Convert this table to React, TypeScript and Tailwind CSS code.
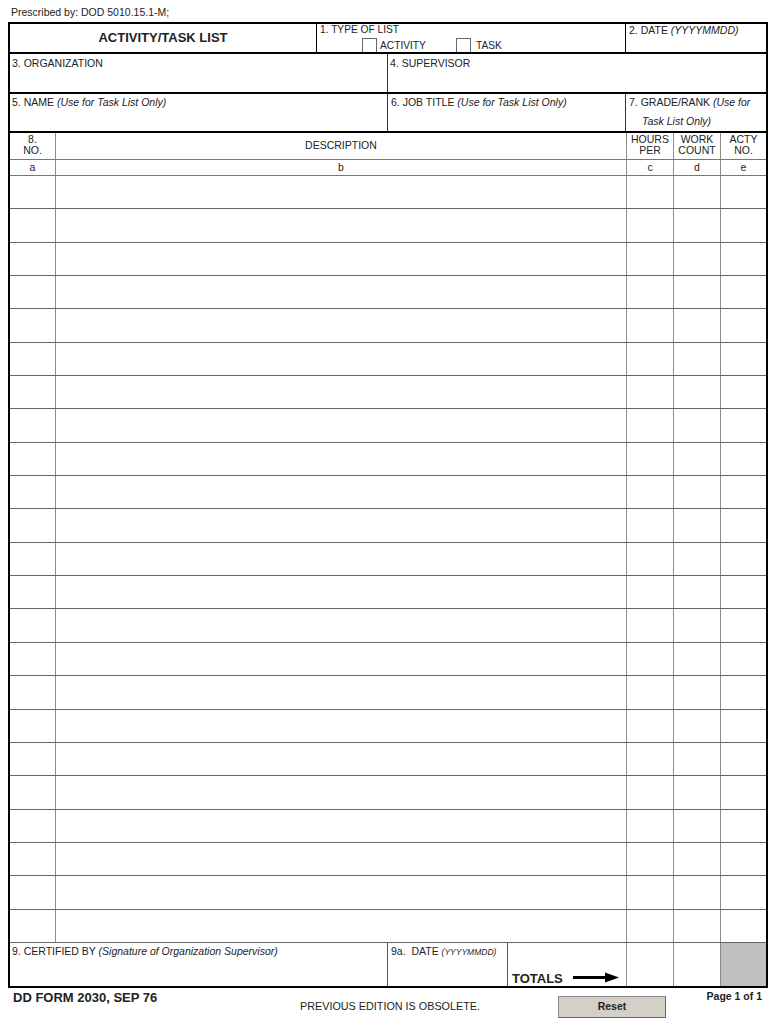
import React from "react";

function Row({ i }: { i: number }) {
  return (
    <div className="flex-1 flex border-b border-[#666]" data-i={i}>
      <div className="w-[46px] border-r border-[#8c8c8c]" />
      <div className="w-[571px] border-r border-[#8c8c8c]" />
      <div className="w-[47px] border-r border-[#8c8c8c]" />
      <div className="w-[47px] border-r border-[#8c8c8c]" />
      <div className="flex-1" />
    </div>
  );
}

export default function App() {
  const rows = Array.from({ length: 23 }, (_, i) => i);
  return (
    <div className="w-[779px] h-[1024px] bg-white text-[#222] font-['Liberation_Sans',Arial,sans-serif] overflow-hidden">
      <div className="h-[22px] pl-[11px] pt-[6px] text-[10.5px] leading-[12px]">
        Prescribed by: DOD 5010.15.1-M;
      </div>
      <div className="ml-[8px] w-[760px] border-2 border-black">
        {/* Row 1 */}
        <div className="flex h-[30px] border-b-2 border-black">
          <div className="w-[307px] border-r border-black flex items-center justify-center text-[13px] font-bold leading-[14px]">
            ACTIVITY/TASK LIST
          </div>
          <div className="w-[309px] border-r border-black flex flex-col text-[10.2px] leading-[12px]">
            <div className="pl-[3px]">1. TYPE OF LIST</div>
            <div className="mt-auto flex items-end pl-[45px]">
              <div className="w-[94px] flex items-center">
                <span className="block w-[15px] h-[14px] border border-b-0 border-[#666]" />
                <span className="ml-[3px] mt-[2px]">ACTIVITY</span>
              </div>
              <div className="flex items-center">
                <span className="block w-[15px] h-[14px] border border-b-0 border-[#666]" />
                <span className="ml-[5px] mt-[2px]">TASK</span>
              </div>
            </div>
          </div>
          <div className="flex-1 pl-[3px] text-[10.5px] leading-[12px]">
            2. DATE <i>(YYYYMMDD)</i>
          </div>
        </div>
        {/* Row 2 */}
        <div className="flex h-[40px] border-b-2 border-black text-[10.5px] leading-[12px]">
          <div className="w-[378px] border-r border-[#333] pl-[2px] pt-[3px]">3. ORGANIZATION</div>
          <div className="flex-1 pl-[2px] pt-[3px]">4. SUPERVISOR</div>
        </div>
        {/* Row 3 */}
        <div className="flex h-[39px] border-b-2 border-black text-[10.5px] leading-[12px]">
          <div className="w-[378px] border-r border-[#333] pl-[2px] pt-[2px]">
            5. NAME <i>(Use for Task List Only)</i>
          </div>
          <div className="w-[238px] border-r border-[#333] pl-[3px] pt-[2px]">
            6. JOB TITLE <i>(Use for Task List Only)</i>
          </div>
          <div className="flex-1 pl-[3px] pt-[2px]">
            <div>
              7. GRADE/RANK <i>(Use for</i>
            </div>
            <div className="mt-[7px] pl-[13px]">
              <i>Task List Only)</i>
            </div>
          </div>
        </div>
        {/* Header row */}
        <div className="flex h-[27px] border-b border-[#777] text-[10.5px] leading-[11.5px] text-center">
          <div className="w-[46px] border-r border-[#8c8c8c] pt-[0.5px]">
            <div>8.</div>
            <div>NO.</div>
          </div>
          <div className="w-[571px] border-r border-[#8c8c8c] flex items-center justify-center">
            DESCRIPTION
          </div>
          <div className="w-[47px] border-r border-[#8c8c8c] pt-[0.5px]">
            <div>HOURS</div>
            <div>PER</div>
          </div>
          <div className="w-[47px] border-r border-[#8c8c8c] pt-[0.5px]">
            <div>WORK</div>
            <div>COUNT</div>
          </div>
          <div className="flex-1 pt-[0.5px]">
            <div>ACTY</div>
            <div>NO.</div>
          </div>
        </div>
        {/* Letters row */}
        <div className="flex h-[16px] border-b border-[#777] text-[10.5px] leading-[15px] text-center">
          <div className="w-[46px] border-r border-[#8c8c8c]">a</div>
          <div className="w-[571px] border-r border-[#8c8c8c]">b</div>
          <div className="w-[47px] border-r border-[#8c8c8c]">c</div>
          <div className="w-[47px] border-r border-[#8c8c8c]">d</div>
          <div className="flex-1">e</div>
        </div>
        {/* Body rows */}
        <div className="h-[767px] flex flex-col">
          {rows.map((i) => (
            <Row key={i} i={i} />
          ))}
        </div>
        {/* Certification row */}
        <div className="flex h-[43px] text-[10.5px] leading-[12px]">
          <div className="w-[378px] border-r border-[#555] pl-[2px] pt-[2px]">
            9. CERTIFIED BY <i>(Signature of Organization Supervisor)</i>
          </div>
          <div className="w-[120px] border-r border-[#555] pl-[3px] pt-[2px]">
            9a.&nbsp; DATE <i className="text-[8.5px]">(YYYYMMDD)</i>
          </div>
          <div className="w-[119px] border-r border-[#8c8c8c] flex items-end pl-[4px] pb-[1px]">
            <span className="text-[13px] font-bold leading-[13px]">TOTALS</span>
            <svg className="ml-[10px] mb-[2px]" width="46" height="11" viewBox="0 0 46 11">
              <rect x="0" y="4" width="34" height="3" fill="#000" />
              <polygon points="32,0.5 46,5.5 32,10.5" fill="#000" />
            </svg>
          </div>
          <div className="w-[47px] border-r border-[#8c8c8c]" />
          <div className="w-[47px] border-r border-[#8c8c8c]" />
          <div className="flex-1 bg-[#c0c0c0]" />
        </div>
      </div>
      {/* Footer */}
      <div className="ml-[8px] w-[760px] h-[36px] flex items-start">
        <div className="w-[292px] pl-[5px] pt-[2px] text-[13px] font-bold leading-[15px]">
          DD FORM 2030, SEP 76
        </div>
        <div className="w-[258px] pt-[12px] text-[10.8px] leading-[13px]">
          PREVIOUS EDITION IS OBSOLETE.
        </div>
        <div className="mt-[8px] w-[108px] h-[22px] bg-[#d4d0c8] border border-[#8a8a8a] border-b-[#666] border-r-[#666] flex items-center justify-center text-[10.5px] font-bold">
          Reset
        </div>
        <div className="flex-1 text-right pr-[6px] pt-[2px] text-[10.5px] font-bold leading-[12px]">
          Page 1 of 1
        </div>
      </div>
    </div>
  );
}
